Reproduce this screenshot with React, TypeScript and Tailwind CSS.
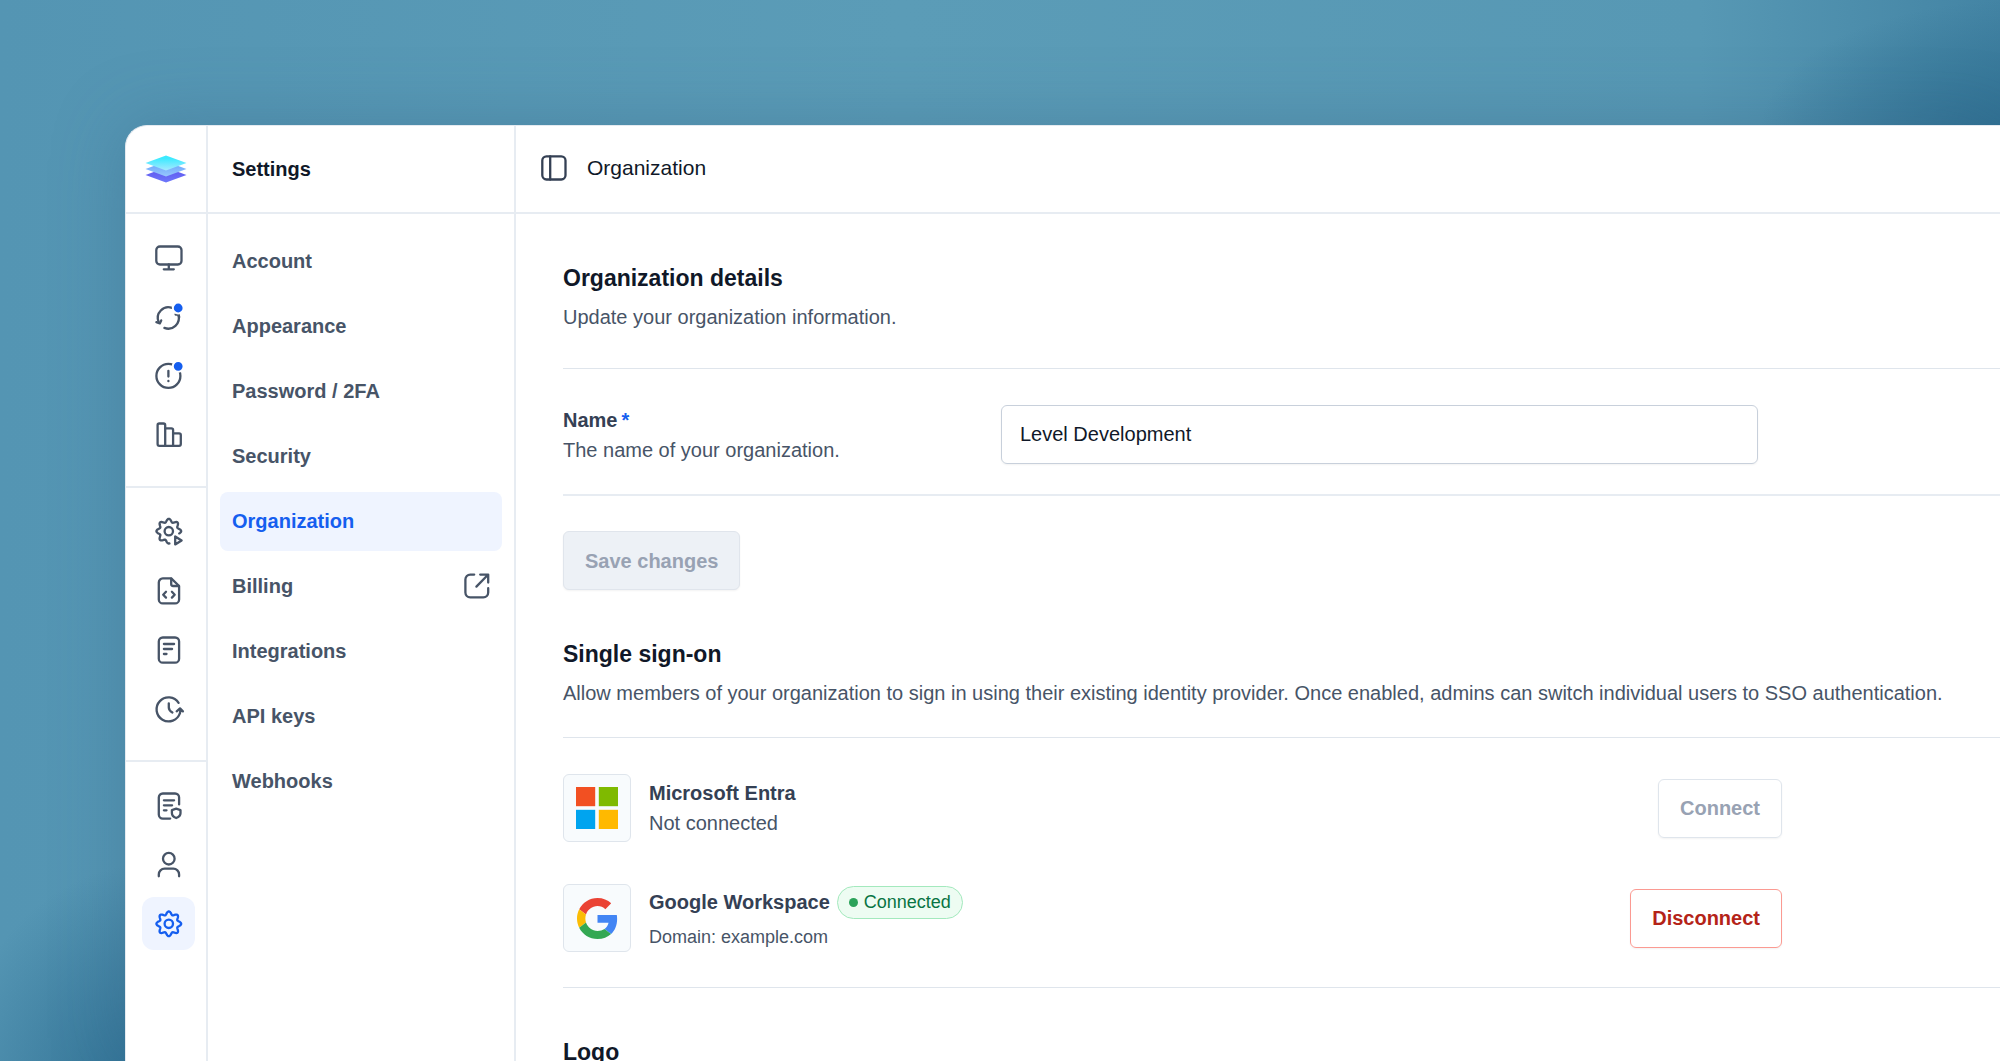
import { useState } from 'react';
import type { ReactNode } from 'react';
import { clsx } from 'clsx';

const settingsLinks = [
  { name: 'Account', href: '#account' },
  { name: 'Appearance', href: '#appearance' },
  { name: 'Password / 2FA', href: '#password' },
  { name: 'Security', href: '#security' },
  { name: 'Organization', href: '#organization' },
  { name: 'Billing', href: '#billing', external: true },
  { name: 'Integrations', href: '#integrations' },
  { name: 'API keys', href: '#api-keys' },
  { name: 'Webhooks', href: '#webhooks' },
];

// Eight-lobed gear outline around a center point
const gearPath = (cx: number, cy: number, from = 0, to = 360) => {
  const points: string[] = [];
  for (let deg = from; deg <= to; deg += 3) {
    const a = (deg * Math.PI) / 180;
    const r = 10.8 + 1.6 * Math.cos(8 * a);
    points.push(`${(cx + r * Math.cos(a)).toFixed(2)} ${(cy + r * Math.sin(a)).toFixed(2)}`);
  }
  return `M${points.join('L')}`;
};

const Icon = ({ size = 32, className, children }: { size?: number; className?: string; children: ReactNode }) => (
  <svg
    width={size}
    height={size}
    viewBox={`0 0 ${size} ${size}`}
    fill="none"
    stroke="currentColor"
    strokeWidth="2.3"
    strokeLinecap="round"
    strokeLinejoin="round"
    className={className}
    aria-hidden="true"
  >
    {children}
  </svg>
);

const Dot = ({ cy }: { cy: number }) => (
  <circle cx="25.2" cy={cy} r="5.4" fill="#155eef" stroke="#fff" strokeWidth="2" />
);

const MonitorIcon = () => (
  <Icon>
    <rect x="3.3" y="4.5" width="25.2" height="18" rx="3.6" />
    <path d="M15.8 22.5v4.8M10.8 27.3h10" />
  </Icon>
);

const SyncIcon = () => (
  <Icon>
    <path d="M5.6 20.8A10.6 10.6 0 0 1 19 6.9" />
    <path d="M3.4 21.2l3.400 1.2 1.400-3" />
    <path d="M25.400 14A10.600 10.600 0 0 1 11.400 26.900" />
    <path d="M22.600 13.500h3l.6 2.600" />
    <Dot cy={7} />
  </Icon>
);

const AlertIcon = () => (
  <Icon>
    <circle cx="15.4" cy="15.9" r="12" />
    <path d="M15.4 10.800v5.800M15.4 21v.2" />
    <Dot cy={6.3} />
  </Icon>
);

const ReportsIcon = () => (
  <Icon>
    <path d="M4.6 6.2c0-1 .7-1.7 1.7-1.7h4.2c1 0 1.7.7 1.7 1.7v20.6H6.3c-1 0-1.7-.7-1.7-1.7z" />
    <path d="M12.2 9.4h6.2c1 0 1.7.7 1.7 1.7v15.7h-7.9" />
    <path d="M20.1 14.4h6c1 0 1.7.7 1.7 1.7v9c0 1-.7 1.7-1.7 1.7h-6" />
  </Icon>
);

const AutomationIcon = () => (
  <Icon>
    <path d={gearPath(15.8, 15.2, 87, 372)} />
    <circle cx="15.8" cy="15.2" r="4.2" />
    <path d="M22.2 20.4v8l6.4-4z" />
  </Icon>
);

const ScriptIcon = () => (
  <Icon>
    <path d="M18.2 3.4H9.8a4 4 0 0 0-4 4v17a4 4 0 0 0 4 4h12.3a4 4 0 0 0 4-4V11z" />
    <path d="M18.2 3.6V9c0 1.2.8 2 2 2h5.7" />
    <path d="M13 16.8l-2.800 2.900 2.800 2.900M18.900 16.800l2.800 2.900-2.800 2.900" />
  </Icon>
);

const NotesIcon = () => (
  <Icon>
    <rect x="5.8" y="3.5" width="20.3" height="25.2" rx="4" />
    <path d="M10.9 10h10.2M10.9 15h8.2M10.9 20h2.6" />
  </Icon>
);

const HistoryIcon = () => (
  <Icon>
    <path d="M25.600 9.800A12 12 0 1 0 27 20" />
    <path d="M27 20c.4-1.400.4-2.600.1-4.200M23.700 18.300l3.300-2.900 2.900 3" />
    <path d="M15.800 10.300v4.200c0 2.400 1.300 3.600 3.600 5" />
  </Icon>
);

const AuditIcon = () => (
  <Icon>
    <path d="M17.2 28.6H9.8a4 4 0 0 1-4-4V7.5a4 4 0 0 1 4-4h12.3a4 4 0 0 1 4 4v6.9" />
    <path d="M10.9 10.3h10.2M10.9 15.3h8.2M10.9 20.3h2.6" />
    <path d="M23.2 18.7l4.3 1.4v3.2c0 2.200-1.800 3.800-4.300 4.700-2.500-.9-4.300-2.500-4.300-4.700v-3.200z" />
  </Icon>
);

const UserIcon = () => (
  <Icon>
    <circle cx="15.8" cy="9.7" r="5.8" />
    <path d="M5.8 27.300v-1.800a5.800 5.800 0 0 1 5.800-5.800h8.700a5.800 5.800 0 0 1 5.800 5.800v1.800" />
  </Icon>
);

const SettingsIcon = () => (
  <Icon>
    <path d={`${gearPath(15.8, 15.8)}Z`} />
    <circle cx="15.8" cy="15.8" r="4.2" />
  </Icon>
);

const ExternalIcon = () => (
  <Icon size={26}>
    <path d="M10.2 1.6h-4a4.800 4.800 0 0 0-4.800 4.800v13.200a4.800 4.800 0 0 0 4.800 4.800h13.200a4.800 4.800 0 0 0 4.800-4.800v-4.400" />
    <path d="M16.200 1.600h8v8M12.400 13.600L24 1.800" />
  </Icon>
);

const PanelIcon = () => (
  <Icon size={26}>
    <rect x="1.3" y="1.3" width="23.2" height="23.2" rx="4.2" />
    <path d="M9.2 1.3v23.2" />
  </Icon>
);

const LayersLogo = () => (
  <svg width="42" height="28" viewBox="0 0 42 28" aria-hidden="true">
    <defs>
      <linearGradient id="layer-top" x1="0" y1="0" x2="0" y2="1">
        <stop offset="0.2" stopColor="#3deaff" />
        <stop offset="1" stopColor="#a9e9fe" />
      </linearGradient>
      <linearGradient id="layer-mid" x1="0" y1="0" x2="0" y2="1">
        <stop offset="0.3" stopColor="#74abfb" />
        <stop offset="1" stopColor="#98c8fd" />
      </linearGradient>
      <linearGradient id="layer-low" x1="0" y1="0" x2="0" y2="1">
        <stop offset="0.4" stopColor="#6461f2" />
        <stop offset="1" stopColor="#6d78fb" />
      </linearGradient>
    </defs>
    <path d="M21 12.4l20.5 7.5L21 27.6.5 19.9z" fill="url(#layer-low)" />
    <path d="M21 6.4l20.5 7.5L21 21.6.5 13.9z" fill="url(#layer-mid)" />
    <path d="M21 .4l20.5 7.5L21 15.6.5 7.9z" fill="url(#layer-top)" />
  </svg>
);

const MicrosoftLogo = () => (
  <svg width="42" height="42" viewBox="0 0 42 42" aria-hidden="true">
    <path fill="#f25022" d="M0 0h19.2v19.2H0z" />
    <path fill="#7fba00" d="M22.8 0H42v19.2H22.800z" />
    <path fill="#00a4ef" d="M0 22.8h19.2V42H0z" />
    <path fill="#ffb900" d="M22.8 22.8H42V42H22.800z" />
  </svg>
);

const GoogleLogo = () => (
  <svg width="41" height="41" viewBox="0 0 48 48" aria-hidden="true">
    <path fill="#ea4335" d="M24 9.5c3.54 0 6.71 1.22 9.21 3.6l6.85-6.85C35.9 2.38 30.47 0 24 0 14.62 0 6.51 5.38 2.56 13.22l7.98 6.19C12.43 13.72 17.74 9.5 24 9.5z" />
    <path fill="#4285f4" d="M46.98 24.55c0-1.57-.15-3.09-.38-4.55H24v9.02h12.94c-.58 2.96-2.26 5.48-4.78 7.18l7.73 6c4.51-4.18 7.09-10.36 7.09-17.65z" />
    <path fill="#fbbc05" d="M10.53 28.59c-.48-1.45-.76-2.99-.76-4.59s.27-3.14.76-4.59l-7.98-6.19C.92 16.46 0 20.12 0 24c0 3.88.92 7.54 2.56 10.78l7.97-6.19z" />
    <path fill="#34a853" d="M24 48c6.48 0 11.93-2.13 15.89-5.81l-7.73-6c-2.15 1.45-4.92 2.3-8.16 2.3-6.26 0-11.57-4.22-13.47-9.91l-7.98 6.19C6.51 42.62 14.62 48 24 48z" />
  </svg>
);

const railSections = [
  [
    { label: 'Devices', icon: <MonitorIcon /> },
    { label: 'Updates', icon: <SyncIcon /> },
    { label: 'Alerts', icon: <AlertIcon /> },
    { label: 'Reports', icon: <ReportsIcon /> },
  ],
  [
    { label: 'Automations', icon: <AutomationIcon /> },
    { label: 'Scripts', icon: <ScriptIcon /> },
    { label: 'Notes', icon: <NotesIcon /> },
    { label: 'History', icon: <HistoryIcon /> },
  ],
  [
    { label: 'Audit log', icon: <AuditIcon /> },
    { label: 'Users', icon: <UserIcon /> },
    { label: 'Settings', icon: <SettingsIcon />, active: true },
  ],
];

const SectionHeader = ({ title, children }: { title: string; children?: ReactNode }) => (
  <div>
    <h2 className="text-[23px] leading-8 font-bold text-[#101828]">{title}</h2>
    {children && <p className="mt-2 leading-[30px] text-[#475467]">{children}</p>}
  </div>
);

const ProviderRow = ({ logo, action, children }: { logo: ReactNode; action: ReactNode; children: ReactNode }) => (
  <div className="flex max-w-[1219px] items-center">
    <div className="mr-[18px] flex size-[68px] shrink-0 items-center justify-center rounded-md border border-[#dfe5ec] bg-[#f8fbfd]">
      {logo}
    </div>
    <div className="flex-1">{children}</div>
    {action}
  </div>
);

const App = () => {
  const [orgName, setOrgName] = useState('Level Development');

  return (
    <div className="h-screen overflow-hidden bg-[#5798b4] bg-[radial-gradient(ellipse_260px_130px_at_101%_130px,#2f6f91_0%,transparent_100%),radial-gradient(ellipse_200px_240px_at_150px_104%,#2c6c90_0%,transparent_100%),linear-gradient(90deg,#5495b3,#5b9cb7_45%,#5798b4_85%,#4384a4)] pt-[125px] pl-[125px] font-['Liberation_Sans',Arial,sans-serif] text-[20px]">
      <div className="flex h-full overflow-hidden rounded-tl-[22px] border-t border-l border-[#e4eaf0] bg-white shadow-[0_0_70px_rgba(50,95,130,0.35)]">
        {/* Icon rail */}
        <nav aria-label="Main" className="w-[82px] shrink-0 border-r-2 border-[#e7ecf2]">
          <a href="#home" aria-label="Home" className="flex h-[88px] items-center justify-center border-b-2 border-[#e7ecf2]">
            <LayersLogo />
          </a>
          {railSections.map((section, i) => (
            <ul
              key={i}
              className={clsx(
                'flex flex-col gap-1.5 pt-[17px] pb-[25px] pl-4',
                i < railSections.length - 1 && 'border-b-2 border-[#e7ecf2]'
              )}
            >
              {section.map(item => (
                <li key={item.label}>
                  <a
                    href={`#${item.label.toLowerCase().replace(' ', '-')}`}
                    aria-label={item.label}
                    className={clsx(
                      'flex size-[53px] items-center justify-center rounded-xl',
                      'active' in item ? 'bg-[#eff4ff] text-[#155eef]' : 'text-[#475467]'
                    )}
                  >
                    {item.icon}
                  </a>
                </li>
              ))}
            </ul>
          ))}
        </nav>

        {/* Settings menu */}
        <nav aria-label="Settings" className="w-[308px] shrink-0 border-r-2 border-[#e7ecf2]">
          <div className="flex h-[88px] items-center border-b-2 border-[#e7ecf2] px-6 font-bold text-[#101828]">Settings</div>
          <ul className="flex flex-col gap-1.5 px-3 py-[18px]">
            {settingsLinks.map(link => (
              <li key={link.name}>
                <a
                  href={link.href}
                  className={clsx(
                    'flex h-[59px] items-center justify-between rounded-lg px-3 pb-0.5 font-bold',
                    link.name === 'Organization' ? 'bg-[#eff4ff] text-[#155eef]' : 'text-[#475467]'
                  )}
                >
                  {link.name}
                  {link.external && <ExternalIcon />}
                </a>
              </li>
            ))}
          </ul>
        </nav>

        {/* Page */}
        <div className="min-w-0 flex-1">
          <header className="flex h-[88px] items-center border-b-2 border-[#e7ecf2] px-[25px] pb-0.5">
            <button type="button" aria-label="Toggle menu" className="mr-5 text-[#344054]">
              <PanelIcon />
            </button>
            <h1 className="text-[21px] text-[#101828]">Organization</h1>
          </header>

          <main className="pt-12 pl-[47px]">
            <section>
              <SectionHeader title="Organization details">Update your organization information.</SectionHeader>
              <form onSubmit={e => e.preventDefault()}>
                <div className="mt-9 border-t border-b-2 border-t-[#dfe5ec] border-b-[#e7ecf2] pt-9 pb-[29px]">
                  <div className="flex max-w-[1195px]">
                    <div className="w-[438px] leading-[30px] text-[#475467]">
                      <label htmlFor="org-name" className="font-bold text-[#344054]">
                        Name<span className="ml-1 text-[#155eef]">*</span>
                      </label>
                      <p>The name of your organization.</p>
                    </div>
                    <input
                      id="org-name"
                      type="text"
                      value={orgName}
                      onChange={e => setOrgName(e.target.value)}
                      className="h-[59px] min-w-0 flex-1 rounded-md border border-[#c8d0db] px-[18px] text-[#101828] shadow-xs"
                    />
                  </div>
                </div>
                <button
                  type="submit"
                  disabled
                  className="mt-[35px] h-[59px] rounded-md border border-[#e0e5ec] bg-[#edf1f6] px-[21px] font-bold text-[#98a2b3] shadow-xs"
                >
                  Save changes
                </button>
              </form>
            </section>

            <section className="mt-12">
              <SectionHeader title="Single sign-on">
                Allow members of your organization to sign in using their existing identity provider. Once enabled, admins can
                switch individual users to SSO authentication.
              </SectionHeader>
              <div className="mt-[29px] flex flex-col gap-[42px] border-y border-[#dfe5ec] pt-9 pb-[35px]">
                <ProviderRow
                  logo={<MicrosoftLogo />}
                  action={
                    <button type="button" disabled className="h-[59px] rounded-md border border-[#dfe5ec] px-[21px] font-bold text-[#98a2b3] shadow-xs">
                      Connect
                    </button>
                  }
                >
                  <h3 className="leading-[30px] font-bold text-[#344054]">Microsoft Entra</h3>
                  <p className="leading-[30px] text-[#475467]">Not connected</p>
                </ProviderRow>
                <ProviderRow
                  logo={<GoogleLogo />}
                  action={
                    <button type="button" className="h-[59px] rounded-md border border-[#fb9a92] px-[21px] font-bold text-[#b42318] shadow-xs">
                      Disconnect
                    </button>
                  }
                >
                  <div className="flex items-center gap-[7px]">
                    <h3 className="font-bold text-[#344054]">Google Workspace</h3>
                    <span className="flex h-[33px] items-center gap-1.5 rounded-full border border-[#a3e9bd] bg-[#edfcf2] px-[11px] text-[18px] text-[#087443]">
                      <span className="size-[9px] rounded-full bg-[#2ba35a]" />
                      Connected
                    </span>
                  </div>
                  <p className="mt-1 text-[18px] leading-7 text-[#475467]">Domain: example.com</p>
                </ProviderRow>
              </div>
            </section>

            <section className="mt-12">
              <SectionHeader title="Logo" />
            </section>
          </main>
        </div>
      </div>
    </div>
  );
};

export default App;
